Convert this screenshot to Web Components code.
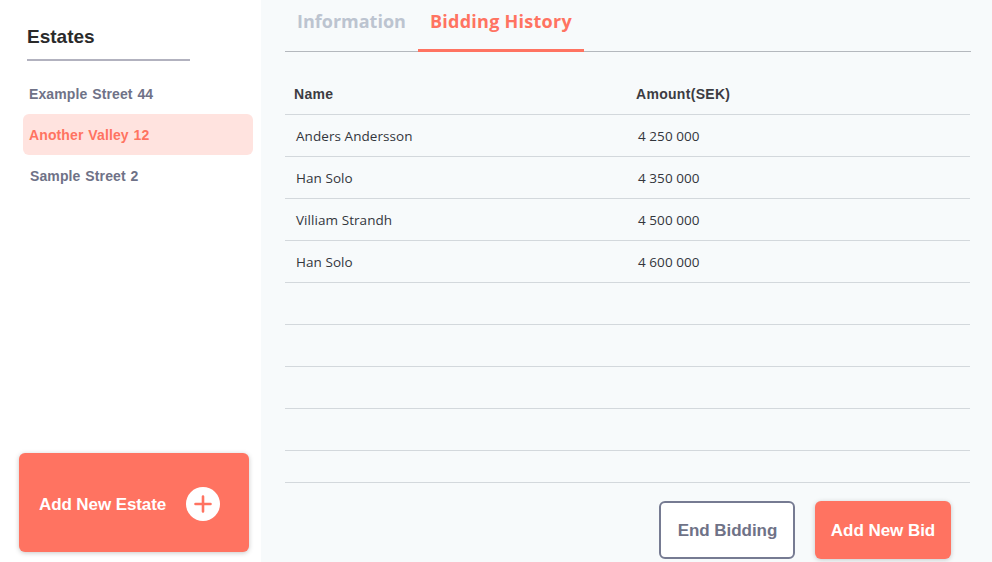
<!DOCTYPE html>
<html><head><meta charset="utf-8"><style>
html,body{margin:0;height:100%;overflow:hidden}
body{width:992px;height:562px;font-family:"Liberation Sans",Arial,sans-serif}
</style></head><body>
<app-shell>
  <estate-sidebar slot="side" title="Estates">
    <estate-item offset="6" label="Example Street 44"></estate-item>
    <estate-item active offset="6" label="Another Valley 12"></estate-item>
    <estate-item offset="7" label="Sample Street 2"></estate-item>
  </estate-sidebar>
  <bid-panel slot="main">
    <tab-bar></tab-bar>
    <bid-table></bid-table>
    <bid-actions></bid-actions>
  </bid-panel>
</app-shell>
<script>
function def(name, html, init){
  customElements.define(name, class extends HTMLElement{
    constructor(){super();this.attachShadow({mode:'open'}).innerHTML=html;}
    connectedCallback(){ if(init) init.call(this,this.shadowRoot); }
  });
}
def('app-shell',`<style>:host{display:flex;width:992px;height:562px;overflow:hidden;background:#f7fafb}
::slotted([slot=side]){flex:0 0 261px}::slotted([slot=main]){flex:1 1 auto;min-width:0}</style>
<slot name="side"></slot><slot name="main"></slot>`);
def('estate-sidebar',`<style>:host{display:flex;flex-direction:column;background:#fff;height:562px;box-sizing:border-box;padding:0 8px 10px 19px}
h1{margin:0;margin-left:8px;padding-top:26px;height:33px;width:163px;box-sizing:content-box;border-bottom:2px solid #b2b2bf;font:bold 19px/22px "Liberation Sans",Arial,sans-serif;color:#2a2a2a;white-space:nowrap}
.list{display:flex;flex-direction:column;margin-top:12px;margin-left:4px;gap:0}
.add{margin-top:auto;height:99px;width:230px;box-sizing:border-box;background:#ff7361;border-radius:6px;box-shadow:0 1px 5px rgba(0,0,0,.22);display:flex;align-items:center;padding:4px 0 0 20px;color:#fff;font:bold 17px/20px "Liberation Sans",Arial,sans-serif;letter-spacing:-.1px}
.add svg{margin-left:20px;display:block;position:relative;top:-1px}
</style><h1 id="t"></h1><div class="list"><slot></slot></div>
<div class="add"><span>Add New Estate</span><svg width="34" height="34" viewBox="0 0 34 34"><circle cx="17" cy="17" r="17" fill="#fff"/><path d="M17 9.5v15M9.5 17h15" stroke="#ff7361" stroke-width="2.6" stroke-linecap="round" fill="none"/></svg></div>`,
function(r){r.getElementById('t').textContent=this.getAttribute('title');});
def('estate-item',`<style>:host{display:flex;align-items:center;height:41px;width:230px;box-sizing:border-box;border-radius:6px;font:bold 14px/16px "Liberation Sans",Arial,sans-serif;letter-spacing:.12px;word-spacing:.8px;color:#6f7287;white-space:nowrap}
:host([active]){background:#ffe3df;color:#ff7361}</style><span id="l"></span>`,
function(r){r.getElementById('l').textContent=this.getAttribute('label');this.style.paddingLeft=this.getAttribute('offset')+'px';});
def('bid-panel',`<style>:host{display:flex;flex-direction:column;height:562px;box-sizing:border-box;padding:0 21px 0 24px}</style><slot></slot>`);
def('tab-bar',`<style>:host{display:flex;height:52px;box-sizing:border-box;border-bottom:1px solid #b4b8bd;padding-left:0;font:bold 18px/27px "Open Sans","Noto Sans",sans-serif}
.t{box-sizing:border-box;height:52px;padding:8px 12px 0;white-space:nowrap;color:#bcc4d0}
.a{color:#ff7361;border-bottom:3px solid #ff7361;letter-spacing:.26px}</style>
<div class="t">Information</div><div class="t a">Bidding History</div>`);
const rows=[['Anders Andersson','4 250 000'],['Han Solo','4 350 000'],['Villiam Strandh','4 500 000'],['Han Solo','4 600 000'],['',''],['',''],['',''],['',''],['','']];
def('bid-table',`<style>:host{display:block;width:685px;margin-top:21px}
.r{display:grid;grid-template-columns:342px 1fr;align-items:center;height:42px;box-sizing:border-box;border-bottom:1px solid #d3d8dc;padding:1px 0 0 11px;font:13.5px/19px "Open Sans","Noto Sans",sans-serif;letter-spacing:.06px;color:#33363c}
.r:last-child{height:32px}
.h{height:42px;padding:0 0 0 9px;font:bold 14px/16px "Liberation Sans",Arial,sans-serif;letter-spacing:.3px;color:#3c3c42}
</style><div class="r h"><span>Name</span><span>Amount(SEK)</span></div>`+rows.map(a=>`<div class="r"><span>${a[0]}</span><span>${a[1]}</span></div>`).join(''));
def('bid-actions',`<style>:host{display:flex;justify-content:flex-end;gap:20px;padding-right:20px;margin-top:18px}
.b{width:136px;height:58px;box-sizing:border-box;border-radius:6px;display:flex;align-items:center;justify-content:center;padding-top:1px;font:bold 17px/20px "Liberation Sans",Arial,sans-serif;letter-spacing:-.05px;white-space:nowrap}
.o{background:#fff;border:2px solid #767b92;color:#6f7287;padding-left:1px}
.f{background:#ff7361;color:#fff;box-shadow:0 1px 5px rgba(0,0,0,.2)}</style>
<div class="b o">End Bidding</div><div class="b f">Add New Bid</div>`);
</script></body></html>
